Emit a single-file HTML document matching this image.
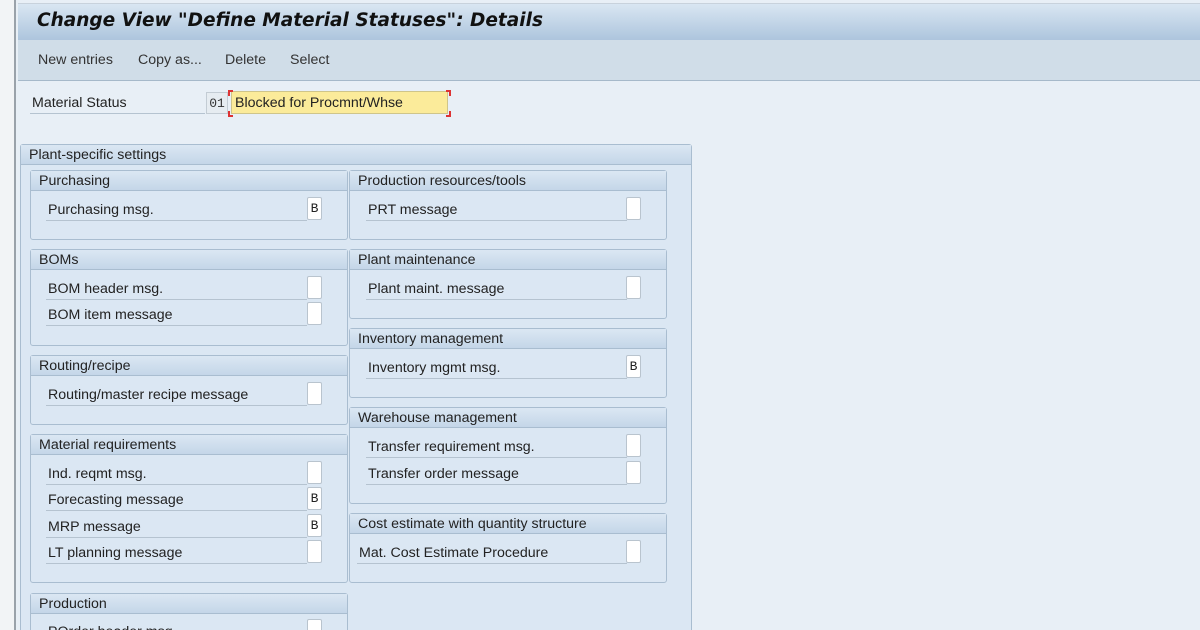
<!DOCTYPE html>
<html><head><meta charset="utf-8"><style>
*{margin:0;padding:0;box-sizing:border-box}
html,body{width:1200px;height:630px;overflow:hidden}
body{background:#e8eff6;font-family:"Liberation Sans",sans-serif;font-size:14.2px;color:#222;position:relative}
.a{position:absolute}
#side{left:0;top:0;width:16px;height:630px;background:#f2f4f6;border-right:2px solid #9aa2aa}
#title{left:18px;top:3px;width:1182px;height:37px;background:linear-gradient(#d9e6f2,#adc5dd);border-top:1px solid #c8d2dc}
#title span{position:absolute;left:19px;top:6px;font:italic bold 18.5px "DejaVu Sans",sans-serif;color:#111}
#tb{left:18px;top:40px;width:1182px;height:41px;background:#d0dde8;border-bottom:1px solid #a6b9ca}
#tb span{position:absolute;top:12px;color:#333}
.box{border:1px solid #a9bdd0;background:#dbe7f3;border-radius:3px}
.hd{position:absolute;left:0;top:0;right:0;height:20px;background:linear-gradient(#dbe7f3,#c4d6e8);border-bottom:1px solid #a9bdd0;padding:2px 8px;white-space:nowrap}
.l{position:absolute;height:24px;border-bottom:1px solid #b5c3d0;padding:5px 2px 0;white-space:nowrap}
.cb{position:absolute;width:15px;height:23px;background:#fff;border:1px solid #b9c4ce;border-radius:2px;font:13px "Liberation Mono",monospace;text-align:center;line-height:21px}
.br{position:absolute;width:5px;height:6px;border-color:#d33;border-style:solid;border-width:0}
</style></head><body>
<div class="a" id="side"></div>
<div class="a" id="title"><span>Change View "Define Material Statuses": Details</span></div>
<div class="a" id="tb"><span style="left:20px">New entries</span><span style="left:120px">Copy as...</span><span style="left:207px">Delete</span><span style="left:272px">Select</span></div>

<div class="l" style="left:30px;top:90px;width:175px">Material Status</div>
<div class="a" style="left:206px;top:92px;width:22px;height:22px;background:#e6ecf1;border:1px solid #c3ccd4;font:13px 'Liberation Mono',monospace;padding-top:3px;text-align:center;color:#333">01</div>
<div class="a" style="left:231px;top:91px;width:217px;height:23px;background:#fbeb9a;border:1px solid #cfc58a;padding:3px 3px;white-space:nowrap">Blocked for Procmnt/Whse</div>
<div class="br" style="left:228px;top:90px;border-left-width:2px;border-top-width:2px"></div>
<div class="br" style="left:228px;top:111px;border-left-width:2px;border-bottom-width:2px"></div>
<div class="br" style="left:446px;top:90px;border-right-width:2px;border-top-width:2px"></div>
<div class="br" style="left:446px;top:111px;border-right-width:2px;border-bottom-width:2px"></div>

<div class="a box" style="left:20px;top:144px;width:672px;height:500px"><div class="hd">Plant-specific settings</div></div>

<div class="a box" style="left:30px;top:170px;width:318px;height:70px"><div class="hd">Purchasing</div></div>
<div class="a box" style="left:30px;top:249px;width:318px;height:97px"><div class="hd">BOMs</div></div>
<div class="a box" style="left:30px;top:355px;width:318px;height:70px"><div class="hd">Routing/recipe</div></div>
<div class="a box" style="left:30px;top:434px;width:318px;height:149px"><div class="hd">Material requirements</div></div>
<div class="a box" style="left:30px;top:593px;width:318px;height:60px"><div class="hd">Production</div></div>

<div class="a box" style="left:349px;top:170px;width:318px;height:70px"><div class="hd">Production resources/tools</div></div>
<div class="a box" style="left:349px;top:249px;width:318px;height:70px"><div class="hd">Plant maintenance</div></div>
<div class="a box" style="left:349px;top:328px;width:318px;height:70px"><div class="hd">Inventory management</div></div>
<div class="a box" style="left:349px;top:407px;width:318px;height:97px"><div class="hd">Warehouse management</div></div>
<div class="a box" style="left:349px;top:513px;width:318px;height:70px"><div class="hd">Cost estimate with quantity structure</div></div>

<div class="l" style="left:46px;top:197px;width:261px">Purchasing msg.</div><div class="cb" style="left:307px;top:197px">B</div>
<div class="l" style="left:46px;top:276px;width:261px">BOM header msg.</div><div class="cb" style="left:307px;top:276px"></div>
<div class="l" style="left:46px;top:302px;width:261px">BOM item message</div><div class="cb" style="left:307px;top:302px"></div>
<div class="l" style="left:46px;top:382px;width:261px">Routing/master recipe message</div><div class="cb" style="left:307px;top:382px"></div>
<div class="l" style="left:46px;top:461px;width:261px">Ind. reqmt msg.</div><div class="cb" style="left:307px;top:461px"></div>
<div class="l" style="left:46px;top:487px;width:261px">Forecasting message</div><div class="cb" style="left:307px;top:487px">B</div>
<div class="l" style="left:46px;top:514px;width:261px">MRP message</div><div class="cb" style="left:307px;top:514px">B</div>
<div class="l" style="left:46px;top:540px;width:261px">LT planning message</div><div class="cb" style="left:307px;top:540px"></div>
<div class="l" style="left:46px;top:619px;width:261px">POrder header msg.</div><div class="cb" style="left:307px;top:619px"></div>

<div class="l" style="left:366px;top:197px;width:261px">PRT message</div><div class="cb" style="left:626px;top:197px"></div>
<div class="l" style="left:366px;top:276px;width:261px">Plant maint. message</div><div class="cb" style="left:626px;top:276px"></div>
<div class="l" style="left:366px;top:355px;width:261px">Inventory mgmt msg.</div><div class="cb" style="left:626px;top:355px">B</div>
<div class="l" style="left:366px;top:434px;width:261px">Transfer requirement msg.</div><div class="cb" style="left:626px;top:434px"></div>
<div class="l" style="left:366px;top:461px;width:261px">Transfer order message</div><div class="cb" style="left:626px;top:461px"></div>
<div class="l" style="left:357px;top:540px;width:270px">Mat. Cost Estimate Procedure</div><div class="cb" style="left:626px;top:540px"></div>
</body></html>
